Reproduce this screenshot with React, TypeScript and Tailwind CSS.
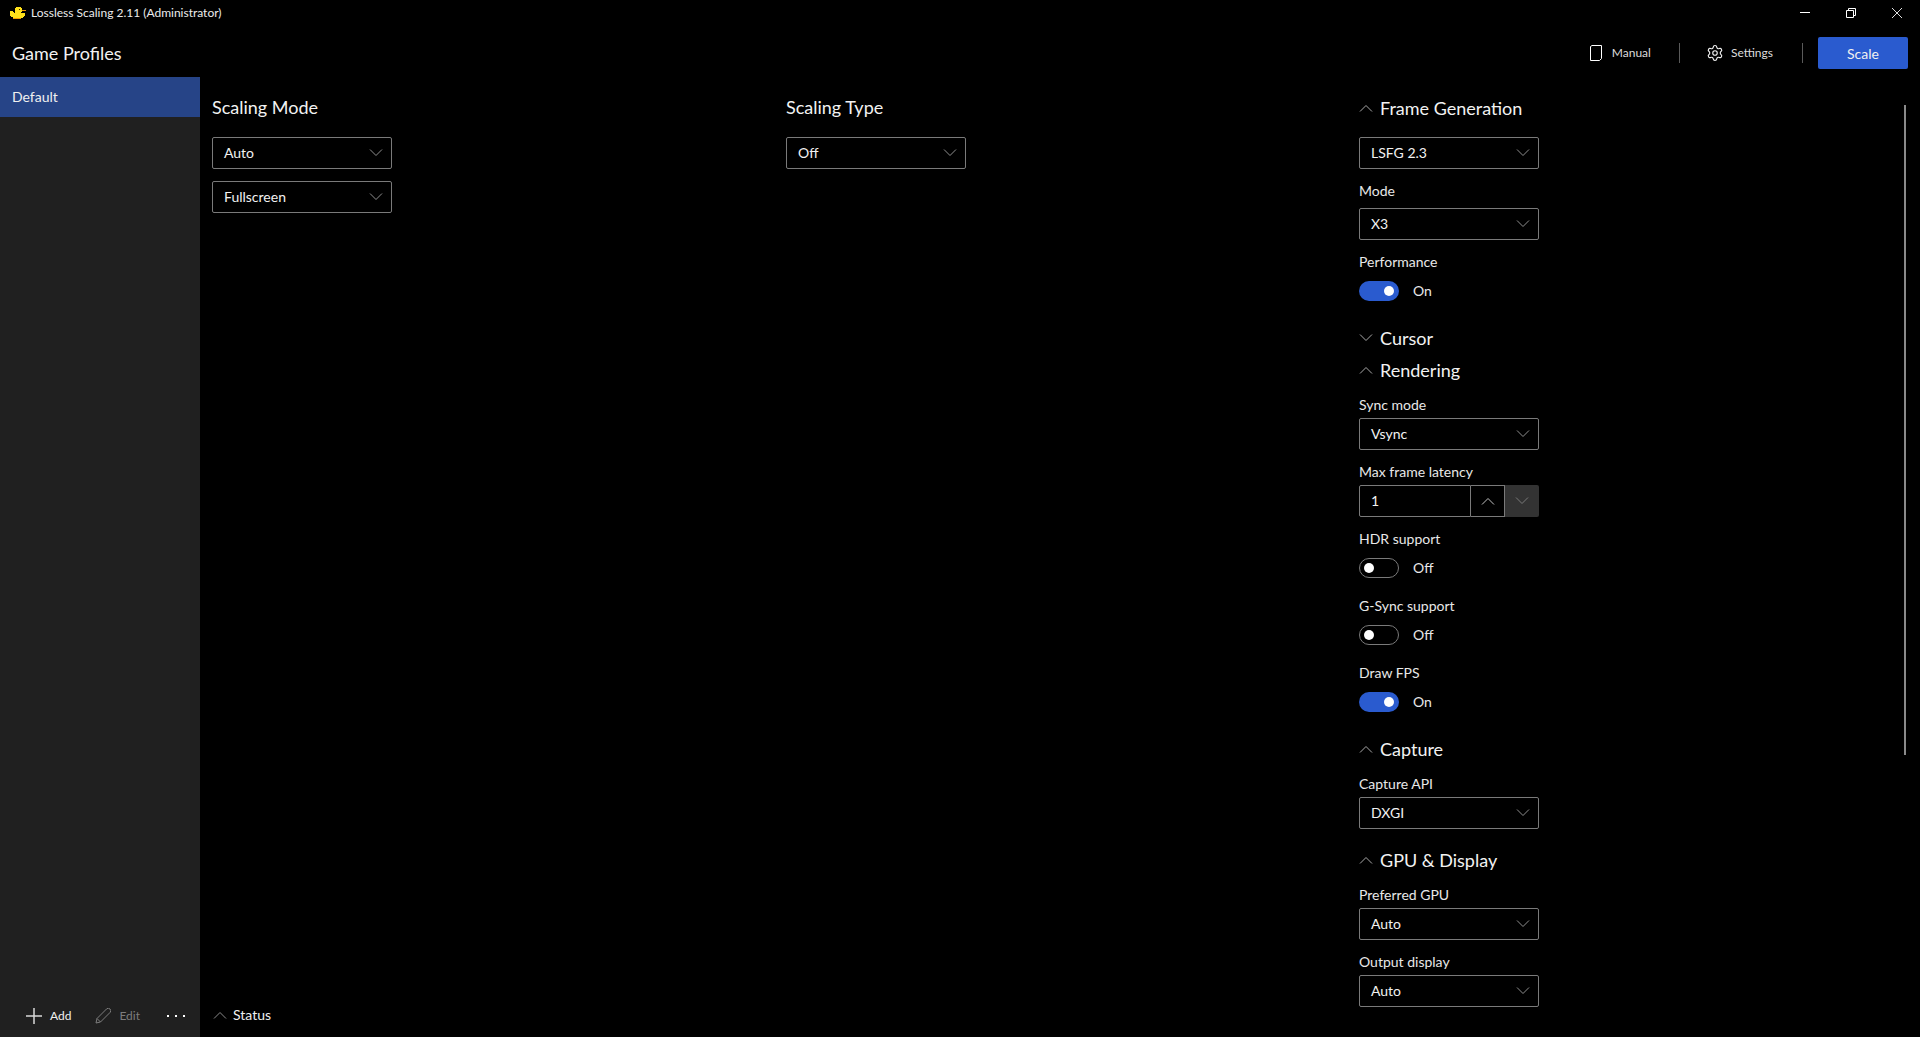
import { Settings } from "lucide-react";

const font = { fontFamily: 'Lato, "Noto Sans", sans-serif' };

function Chevron({ up = false, className = "" }: { up?: boolean; className?: string }) {
  return (
    <svg className={"h-[8px] w-[14px] shrink-0 " + className} viewBox="0 0 14 8" fill="none" stroke="currentColor" strokeWidth="1">
      <path d={up ? "M1 7.5l6-6 6 6" : "M1 .5l6 6 6-6"} />
    </svg>
  );
}

function Duck() {
  return (
    <svg className="h-[12px] w-[16px]" viewBox="0 0 16 12" shapeRendering="crispEdges">
      <path fill="#ffe11a" d="M6 0h5v1h1v4h-1v1h4v3h-1v1h-1v1H3v-1H1V9H0V4h3v1h1v1h1V1h1z" />
      <path fill="#f09a00" d="M12 3h4v1h-4zM3 11h8v1H3z" />
      <path fill="#3a2a00" d="M9 2h1v1H9z" />
    </svg>
  );
}

function Select({ value, className = "" }: { value: string; className?: string }) {
  return (
    <div className={"flex h-8 w-[180px] items-center justify-between rounded-[2px] border border-[#7a7a7a] pl-[11px] pr-[8px] text-[14px] text-[#f2f2f2] " + className}>
      <span className="pb-[2px]">{value}</span>
      <Chevron className="text-[#8e8e8e]" />
    </div>
  );
}

function Section({ title, open = true }: { title: string; open?: boolean }) {
  return (
    <div className="flex h-6 items-center pb-[2px]">
      <Chevron up={open} className="text-[#a8a8a8]" />
      <span className="ml-[7px] text-[18px] text-[#f2f2f2]">{title}</span>
    </div>
  );
}

function Label({ children }: { children: string }) {
  return <div className="h-5 text-[14px] leading-5 text-[#e8e8e8]">{children}</div>;
}

function Toggle({ on }: { on: boolean }) {
  return (
    <div className="flex h-5 items-center">
      {on ? (
        <div className="flex h-5 w-10 items-center justify-end rounded-full bg-[#2a5bcf] pr-[5px]">
          <div className="h-[10px] w-[10px] rounded-full bg-white"></div>
        </div>
      ) : (
        <div className="flex h-5 w-10 items-center rounded-full border border-[#7a7a7a] pl-[4px]">
          <div className="h-[10px] w-[10px] rounded-full bg-white"></div>
        </div>
      )}
      <span className="ml-[14px] pb-[2px] text-[14px] text-[#e8e8e8]">{on ? "On" : "Off"}</span>
    </div>
  );
}

export default function App() {
  return (
    <div style={font} className="flex h-[1037px] w-[1920px] flex-col overflow-hidden bg-black text-white">
      {/* title bar */}
      <div className="flex h-[26px] shrink-0 items-center pl-[10px]">
        <Duck />
        <span className="ml-[5px] text-[12px] text-[#ececec]">Lossless Scaling 2.11 (Administrator)</span>
        <div className="ml-auto flex items-center">
          <svg className="h-[10px] w-[10px]" viewBox="0 0 10 10" stroke="#fff" fill="none"><path d="M0 4.500h10" /></svg>
          <svg className="ml-[36px] h-[10px] w-[10px]" viewBox="0 0 10 10" stroke="#fff" fill="none"><path d="M.5 2.500h7v7h-7zM2.500 2.500v-2h7v7h-2" /></svg>
          <svg className="ml-[36px] mr-[18px] h-[10px] w-[10px]" viewBox="0 0 10 10" stroke="#ddd" fill="none"><path d="M0 0l10 10M10 0L0 10" /></svg>
        </div>
      </div>

      {/* header */}
      <div className="flex h-[51px] shrink-0 items-center pl-3 pr-3 pt-[3px]">
        <span className="text-[18px] text-[#f2f2f2]">Game Profiles</span>
        <div className="ml-auto flex items-center">
          <svg className="h-4 w-3" viewBox="0 0 12 16" fill="none" stroke="#fff"><path d="M2 .5h9.500v13l-2 2H.5v-14z" /></svg>
          <span className="ml-[10px] text-[12px] text-[#dcdcdc]">Manual</span>
          <div className="ml-[28px] h-5 w-px bg-[#5a5a5a]"></div>
          <Settings className="ml-[26px] h-[18px] w-[18px] text-[#f0f0f0]" strokeWidth={1.5} />
          <span className="ml-[7px] text-[12px] text-[#dcdcdc]">Settings</span>
          <div className="ml-[29px] h-5 w-px bg-[#5a5a5a]"></div>
          <div className="ml-[15px] flex h-8 w-[90px] items-center justify-center rounded-[2px] bg-[#2a5bcf] text-[14px] text-[#f0f0f0]">Scale</div>
        </div>
      </div>

      <div className="relative flex min-h-0 flex-1">
        {/* sidebar */}
        <aside className="flex w-[200px] shrink-0 flex-col bg-[#202020]">
          <div className="flex h-10 items-center bg-[#264487] pb-[2px] pl-3 text-[14px] text-[#f0f0f0]">Default</div>
          <div className="mt-auto flex h-[42px] items-center pl-[26px] text-[12px]">
            <svg className="h-4 w-4" viewBox="0 0 16 16" stroke="#d8d8d8" strokeWidth="1.5"><path d="M8 0v16M0 8h16" /></svg>
            <span className="ml-[8px] text-[#f0f0f0]">Add</span>
            <svg className="ml-[24px] h-4 w-4" viewBox="0 0 16 16" fill="none" stroke="#7d7d7d"><path d="M1 15l1-4.500L11.500 1a1.500 1.500 0 0 1 3.500 3.500L5.500 14zM2 10.500l3.500 3.500" /></svg>
            <span className="ml-[8px] text-[#7d7d7d]">Edit</span>
            <div className="ml-[27px] flex gap-[6px]">
              <div className="h-[2px] w-[2px] bg-white"></div>
              <div className="h-[2px] w-[2px] bg-white"></div>
              <div className="h-[2px] w-[2px] bg-white"></div>
            </div>
          </div>
        </aside>

        {/* content */}
        <main className="relative flex min-w-0 flex-1 pl-3 pt-[19px]">
          <div className="w-[574px] shrink-0">
            <div className="flex h-6 items-center pb-[2px] text-[18px] text-[#f2f2f2]">Scaling Mode</div>
            <Select value="Auto" className="mt-[17px]" />
            <Select value="Fullscreen" className="mt-3" />
          </div>
          <div className="w-[573px] shrink-0">
            <div className="flex h-6 items-center pb-[2px] text-[18px] text-[#f2f2f2]">Scaling Type</div>
            <Select value="Off" className="mt-[17px]" />
          </div>
          <div className="w-[180px] shrink-0 pt-[1px]">
            <Section title="Frame Generation" />
            <Select value="LSFG 2.3" className="mt-4" />
            <div className="mt-3"><Label>Mode</Label></div>
            <Select value="X3" className="mt-[7px]" />
            <div className="mt-3"><Label>Performance</Label></div>
            <div className="mt-[9px]"><Toggle on /></div>
            <div className="mt-[26px]"><Section title="Cursor" open={false} /></div>
            <div className="mt-2"><Section title="Rendering" /></div>
            <div className="mt-3"><Label>Sync mode</Label></div>
            <Select value="Vsync" className="mt-[3px]" />
            <div className="mt-3"><Label>Max frame latency</Label></div>
            <div className="mt-[3px] flex h-8 w-[180px]">
              <div className="flex flex-1 items-center rounded-l-[2px] border border-[#7a7a7a] pb-[2px] pl-[11px] text-[14px] text-[#f2f2f2]">1</div>
              <div className="flex w-[34px] items-center justify-center border-y border-r border-[#7a7a7a] text-[#c0c0c0]"><Chevron up /></div>
              <div className="flex w-[34px] items-center justify-center rounded-r-[2px] bg-[#333333] text-[#7a7a7a]"><Chevron /></div>
            </div>
            <div className="mt-3"><Label>HDR support</Label></div>
            <div className="mt-[9px]"><Toggle on={false} /></div>
            <div className="mt-[18px]"><Label>G-Sync support</Label></div>
            <div className="mt-[9px]"><Toggle on={false} /></div>
            <div className="mt-[18px]"><Label>Draw FPS</Label></div>
            <div className="mt-[9px]"><Toggle on /></div>
            <div className="mt-[26px]"><Section title="Capture" /></div>
            <div className="mt-3"><Label>Capture API</Label></div>
            <Select value="DXGI" className="mt-[3px]" />
            <div className="mt-5"><Section title="GPU &amp; Display" /></div>
            <div className="mt-3"><Label>Preferred GPU</Label></div>
            <Select value="Auto" className="mt-[3px]" />
            <div className="mt-3"><Label>Output display</Label></div>
            <Select value="Auto" className="mt-[3px]" />
          </div>

          {/* scrollbar thumb overlays the scroll area */}
          <div className="absolute right-[14px] top-[28px] h-[650px] w-[2px] bg-[#8a8a8a]"></div>
          <div className="absolute bottom-[12px] left-[13px] flex items-center text-[14px] text-[#f0f0f0]">
            <Chevron up className="text-[#8a8a8a]" />
            <span className="ml-[6px]">Status</span>
          </div>
        </main>
      </div>
    </div>
  );
}
